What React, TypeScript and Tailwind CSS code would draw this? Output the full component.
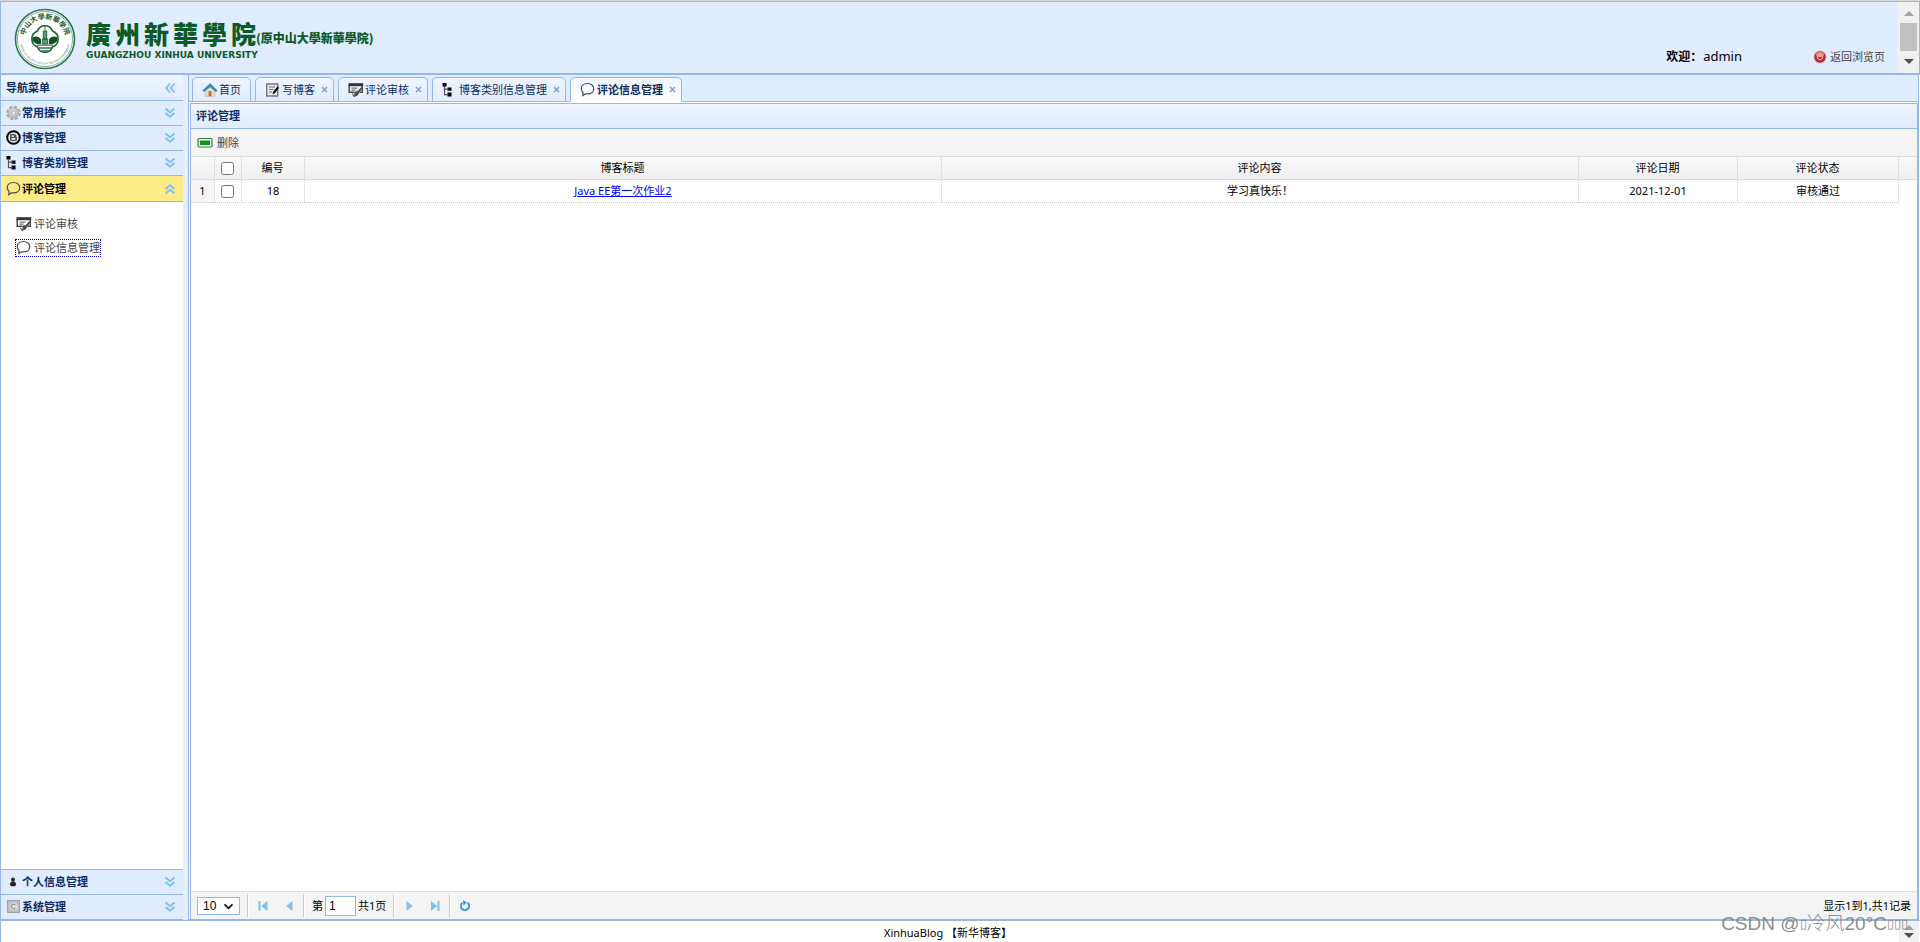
import { useState } from 'react'
import type { ReactNode } from 'react'
import clsx from 'clsx'

type IconProps = { className?: string }

function GearIcon() {
  return (
    <svg viewBox="0 0 16 16" className="w-4 h-4 shrink-0">
      <circle cx="7.5" cy="8" r="6.2" fill="none" stroke="#a9a9a9" strokeWidth="2.2" strokeDasharray="3.2 1.6" />
      <circle cx="7.5" cy="8" r="5.600" fill="#b4b4b4" />
      <circle cx="7" cy="7.2" r="4" fill="#cfcfcf" />
      <circle cx="7.5" cy="8" r="2" fill="#ececec" stroke="#999" strokeWidth="0.6" />
    </svg>
  )
}

function BloggerIcon() {
  return (
    <svg viewBox="0 0 16 16" className="w-4 h-4 shrink-0">
      <circle cx="7.500" cy="7.500" r="6.300" fill="#dfe5ef" stroke="#000" strokeWidth="2" />
      <path d="M5 4h3.400a1.800 1.800 0 0 1 1.800 1.800v.8l.8.6v2a1.900 1.900 0 0 1-1.900 1.900H5.500A1.500 1.500 0 0 1 4 9.600V5a1 1 0 0 1 1-1z" fill="#555" />
      <path d="M5.500 6.200h2.400M5.500 9h3.800" stroke="#fff" strokeWidth="1.300" />
    </svg>
  )
}

function TreeIcon() {
  return (
    <svg viewBox="0 0 16 16" className="w-4 h-4 shrink-0" fill="#000">
      <path d="M.5 1h4v3.500h-4zM5.500 5.500h4v3.200h-4zM5.500 10.500h4v4h-4z" />
      <path d="M2.500 4v8.700h4M2.500 7.200h4" fill="none" stroke="#555" strokeWidth="1.200" />
    </svg>
  )
}

function BubbleIcon() {
  return (
    <svg viewBox="0 0 16 16" className="w-4 h-4 shrink-0">
      <path
        d="M7.500 1.500c3.700 0 6.200 2.200 6.200 5.200s-2.500 5.200-6.200 5.200c-.6 0-1.200 0-1.700-.2L2.800 13.500l.3-3C2 9.600 1.300 8.300 1.300 6.700c0-3 2.500-5.200 6.200-5.200z"
        fill="none"
        stroke="#4c4c4c"
        strokeWidth="1.200"
      />
    </svg>
  )
}

function ReviewIcon() {
  return (
    <svg viewBox="0 0 16 16" className="w-4 h-4 shrink-0">
      <path d="M1.200 3v7.200H6M14.300 3v7.200h-2.500" fill="none" stroke="#4a4a4a" strokeWidth="1.500" />
      <path d="M.5 1.200h14.700v3H.5z" fill="#333" />
      <path d="M3.500 6.200h6M3.500 8.200h4" stroke="#777" strokeWidth="1.200" />
      <path d="M13.500 4.800 9.500 9.500 6 13.500 4.500 11 4 12l2 3 3.500-1.500 4.500-7z" fill="#444" />
      <path d="M10 8.500 6 10l1 4z" fill="#555" />
    </svg>
  )
}

function UserIcon() {
  return (
    <svg viewBox="0 0 16 16" className="w-4 h-4 shrink-0" fill="#222">
      <circle cx="7" cy="5.500" r="1.900" />
      <path d="M5.300 7.500h3.400l1.600 2.700-1.300 2H5l-1.300-2z" />
    </svg>
  )
}

function SystemIcon() {
  return (
    <svg viewBox="0 0 16 16" className="w-4 h-4 shrink-0">
      <rect x="1.500" y="1.500" width="12" height="12" fill="#bdbdbd" stroke="#a2a2a2" />
      <circle cx="7.500" cy="7.500" r="4" fill="#dedede" />
      <path d="M9.200 6a2.300 2.300 0 1 0 0 3" fill="none" stroke="#959595" strokeWidth="1.200" />
    </svg>
  )
}

function HomeIcon() {
  return (
    <svg viewBox="0 0 16 16" className="w-4 h-4 shrink-0">
      <path d="M3.200 7.500 8 3.300l4.800 4.200v6.800H3.200z" fill="#e6ddcf" stroke="#b3aa9d" strokeWidth="0.600" />
      <path d="M6.500 9h3v5.300h-3z" fill="#c07a36" />
      <path d="M.8 8.600 8 1.600l7.200 7-1.400 1L8 4.800 2.200 9.600z" fill="#2a94b8" stroke="#1b6f90" strokeWidth="0.500" />
    </svg>
  )
}

function WriteIcon() {
  return (
    <svg viewBox="0 0 16 16" className="w-4 h-4 shrink-0">
      <path d="M1.700 2h11v12h-11z" fill="#e4e7ee" stroke="#777" strokeWidth="1.400" />
      <path d="M4 5h6M4 7.500h4.500M4 10h3" stroke="#777" strokeWidth="1.200" />
      <path d="M12.500 4.500 14 5.800 10.200 11l-2.700 1.200.6-2.500z" fill="#111" />
    </svg>
  )
}

function DeleteIcon() {
  return (
    <svg viewBox="0 0 16 16" className="w-4 h-4 shrink-0">
      <rect x="1" y="3.500" width="14" height="8.500" rx="1" fill="#eaf7ea" stroke="#3c7f4d" strokeWidth="1.200" />
      <rect x="3" y="5.500" width="10" height="4.500" fill="#12901a" />
    </svg>
  )
}

function PowerIcon() {
  return (
    <svg viewBox="0 0 16 16" className="w-4 h-4 shrink-0">
      <circle cx="8" cy="8" r="6" fill="#c62828" stroke="#b9a0a0" strokeWidth="0.800" />
      <ellipse cx="8" cy="5.500" rx="4" ry="2.600" fill="#e58a85" />
      <path d="M6.200 6.500a2.500 2.500 0 1 0 3.600 0M8 5v3" fill="none" stroke="#f6d4d2" strokeWidth="1" />
    </svg>
  )
}

function DoubleChevron({ className }: IconProps) {
  return (
    <svg viewBox="0 0 12 12" className={clsx('w-3 h-3 shrink-0', className)} fill="none" stroke="#7fc0f2" strokeWidth="1.800">
      <path d="M1.500 1.500 6 5.300l4.500-3.800M1.500 6 6 9.800 10.500 6" />
    </svg>
  )
}

function UniversitySeal() {
  return (
    <svg viewBox="0 0 62 62" className="w-[62px] h-[62px] shrink-0">
      <defs>
        <path id="sealTop" d="M11 36a20.500 20.500 0 1 1 40 0" />
        <path id="sealBottom" d="M6.500 25a25.300 25.300 0 1 0 49 0" />
      </defs>
      <circle cx="31" cy="31" r="29.500" fill="#fff" stroke="#2f7550" strokeWidth="1.600" />
      <circle cx="31" cy="31" r="27.600" fill="none" stroke="#4f9068" strokeWidth="0.700" />
      <text className="font-['Noto_Sans_CJK_TC',sans-serif] font-bold" fontSize="7" fill="#125a2b">
        <textPath href="#sealTop" startOffset="50%" textAnchor="middle">中山大學新華學院</textPath>
      </text>
      <text className="font-['Liberation_Serif',serif]" fontSize="3" fill="#2f7043">
        <textPath href="#sealBottom" startOffset="50%" textAnchor="middle">XINHUA COLLEGE OF SUN YAT-SEN UNIVERSITY</textPath>
      </text>
      <path
        d="M23.500 23a8 8 0 0 1 15 0 8.500 8.500 0 0 1 0 16 8 8 0 0 1-15 0 8.500 8.500 0 0 1 0-16z"
        fill="#fff"
        stroke="#176234"
        strokeWidth="1.600"
      />
      <path d="M31 18.500v4M29.300 23h3.400v8h-3.400zM28.300 31h5.400v5h-5.400z" fill="#5b9872" stroke="#176234" strokeWidth="0.900" />
      <path d="M18.500 29.500c3-2 7-1 8.500 2v4.500h-4c-3-1-5-3.500-4.500-6.500zM43.500 29.500c-3-2-7-1-8.500 2v4.500h4c3-1 5-3.500 4.500-6.500z" fill="#0f5427" />
      <path d="M23 37.200h16M24.500 40h13M27.500 43h7" stroke="#2f7550" strokeWidth="1.300" />
    </svg>
  )
}

const menus = [
  { label: '常用操作', icon: <GearIcon /> },
  { label: '博客管理', icon: <BloggerIcon /> },
  { label: '博客类别管理', icon: <TreeIcon /> },
  { label: '评论管理', icon: <BubbleIcon /> },
  { label: '个人信息管理', icon: <UserIcon /> },
  { label: '系统管理', icon: <SystemIcon /> },
]

const tabs = [
  { label: '首页', icon: <HomeIcon />, closable: false },
  { label: '写博客', icon: <WriteIcon />, closable: true },
  { label: '评论审核', icon: <ReviewIcon />, closable: true },
  { label: '博客类别信息管理', icon: <TreeIcon />, closable: true },
  { label: '评论信息管理', icon: <BubbleIcon />, closable: true },
]

const comments = [
  { id: 18, title: 'Java EE第一次作业2', content: '学习真快乐！', date: '2021-12-01', status: '审核通过' },
]

function ScrollArrow({ down = false, light = false }: { down?: boolean; light?: boolean }) {
  return (
    <svg viewBox="0 0 10 5" className="w-[10px] h-[5px] shrink-0" fill={light ? '#a3a3a3' : '#505050'}>
      <path d={down ? 'M0 0h10L5 5z' : 'M0 5h10L5 0z'} />
    </svg>
  )
}

function Header() {
  return (
    <header className="h-[74px] shrink-0 flex border-t border-t-[#d6d6d6]">
      <div className="flex-1 flex border border-[#95b8e7] bg-[#e0ecff]">
        <div className="flex items-start pl-[13px]">
          <div className="pt-[6px]">
            <UniversitySeal />
          </div>
          <div className="pt-[15px] pl-[10px] text-[#0c5a26]">
            <div className="w-[170px] h-8 flex justify-between items-center font-['Noto_Sans_CJK_TC',sans-serif] font-black text-[25px] leading-none">
              {['廣', '州', '新', '華', '學', '院'].map((char) => (
                <span key={char}>{char}</span>
              ))}
            </div>
            <div className="font-['DejaVu_Sans',sans-serif] font-bold text-[9px] leading-[12px] whitespace-nowrap w-[170px]">
              GUANGZHOU XINHUA UNIVERSITY
            </div>
          </div>
          <div className="pt-[29px] text-[#0c5a26] font-['Noto_Sans_CJK_TC',sans-serif] font-black text-[12px] leading-[14px] whitespace-nowrap">
            (原中山大學新華學院)
          </div>
        </div>
        <div className="ml-auto flex items-end pb-2 pr-[13px]">
          <p className="text-[12px] leading-4 mr-[70px]">
            <strong>欢迎：</strong>
            <span className="ml-px text-[13px]">admin</span>
          </p>
          <a href="#browse" className="flex items-center gap-[2px] text-[#444]">
            <PowerIcon />
            返回浏览页
          </a>
        </div>
        <div aria-hidden className="w-[21px] flex flex-col items-center bg-[#f1f1f1] pt-[9px] pb-[9px]">
          <ScrollArrow light />
          <div className="w-[17px] h-7 mt-[7px] mb-auto bg-[#c1c1c1]" />
          <ScrollArrow down />
        </div>
      </div>
    </header>
  )
}

type MenuHeaderProps = { label: string; icon: ReactNode; open: boolean; onClick: () => void }

function MenuHeader({ label, icon, open, onClick }: MenuHeaderProps) {
  return (
    <button
      onClick={onClick}
      aria-expanded={open}
      className={clsx(
        'w-full shrink-0 flex items-center pl-[5px] pr-[7px] font-bold border-b border-[#95b8e7]',
        open ? 'h-[26px] bg-[#fbec88] text-black' : 'h-[25px] bg-[#e0ecff] text-[#0e2d5f]',
      )}
    >
      {icon}
      {label}
      <DoubleChevron className={clsx('ml-auto', open && 'rotate-180')} />
    </button>
  )
}

function Sidebar() {
  const [active, setActive] = useState('评论管理')
  const top = menus.slice(0, 4)
  const bottom = menus.slice(4)

  return (
    <aside className="w-[183px] shrink-0 flex flex-col border-l border-[#95b8e7] bg-white">
      <div className="h-[26px] shrink-0 flex items-center pl-[5px] pr-[7px] font-bold text-[#0e2d5f] border-b border-[#95b8e7] bg-linear-to-b from-[#eff5ff] to-[#e0ecff]">
        导航菜单
        <button aria-label="collapse" className="ml-auto">
          <DoubleChevron className="rotate-90" />
        </button>
      </div>
      {top.map((menu) => (
        <MenuHeader key={menu.label} {...menu} open={active === menu.label} onClick={() => setActive(menu.label)} />
      ))}
      <nav className="flex-1 flex flex-col items-start gap-[6px] pl-[14px] pt-[13px] text-[#444]">
        <a href="#review" className="h-[18px] flex items-center gap-[2px] border border-transparent">
          <ReviewIcon />
          评论审核
        </a>
        <a href="#comments" className="h-[18px] flex items-center gap-[2px] border border-dotted border-[#0000c0]">
          <BubbleIcon />
          评论信息管理
        </a>
      </nav>
      <div className="border-t border-[#95b8e7]">
        {bottom.map((menu) => (
          <MenuHeader key={menu.label} {...menu} open={active === menu.label} onClick={() => setActive(menu.label)} />
        ))}
      </div>
    </aside>
  )
}

function TabBar() {
  const [current, setCurrent] = useState('评论信息管理')

  return (
    <div className="h-[27px] shrink-0 flex items-end gap-1 pl-[3px] border-b border-[#95b8e7] bg-[#e0ecff]">
      {tabs.map((tab) => {
        const selected = tab.label === current
        return (
          <div
            key={tab.label}
            className={clsx(
              'h-[25px] flex items-center border border-[#95b8e7] rounded-t-[5px] pl-[9px] -mb-px text-[#0e2d5f] bg-linear-to-b from-[#eff5ff]',
              selected ? 'to-white border-b-white font-bold' : 'to-[#e0ecff]',
              tab.closable ? 'pr-[5px]' : 'pr-[9px]',
            )}
          >
            <button onClick={() => setCurrent(tab.label)} className="flex items-center gap-px">
              {tab.icon}
              {tab.label}
            </button>
            {tab.closable && (
              <button aria-label={`关闭${tab.label}`} className="ml-[6px]">
                <svg viewBox="0 0 7 7" className="w-[7px] h-[7px]" stroke="#7d9fd3" strokeWidth="1.500">
                  <path d="M1 1l5 5M6 1 1 6" />
                </svg>
              </button>
            )}
          </div>
        )
      })}
    </div>
  )
}

const headCell = 'h-[23px] p-0 pr-px font-normal border-b border-b-[#ddd] border-r border-r-[#ccc] [border-right-style:dotted] bg-linear-to-b from-[#f9f9f9] to-[#efefef]'
const bodyCell = 'h-[23px] p-0 text-center border-b border-r border-dotted border-[#ccc]'

function CommentGrid() {
  return (
    <table className="w-full table-fixed border-separate border-spacing-0">
      <colgroup>
        <col className="w-6" />
        <col className="w-[27px]" />
        <col className="w-[63px]" />
        <col />
        <col />
        <col className="w-[159px]" />
        <col className="w-[161px]" />
        <col className="w-[18px]" />
      </colgroup>
      <thead>
        <tr>
          <th className={headCell} />
          <th className={headCell}>
            <input type="checkbox" aria-label="全选" className="block mx-auto w-[13px] h-[13px]" />
          </th>
          <th className={headCell}>编号</th>
          <th className={headCell}>博客标题</th>
          <th className={headCell}>评论内容</th>
          <th className={headCell}>评论日期</th>
          <th className={headCell}>评论状态</th>
          <th className="p-0 border-b border-[#ddd] bg-linear-to-b from-[#f9f9f9] to-[#efefef]" />
        </tr>
      </thead>
      <tbody>
        {comments.map((row, i) => (
          <tr key={row.id}>
            <td className={clsx(bodyCell, 'bg-[#f5f5f5]')}>{i + 1}</td>
            <td className={clsx(bodyCell, 'pr-px')}>
              <input type="checkbox" aria-label={row.title} className="block mx-auto w-[13px] h-[13px]" />
            </td>
            <td className={bodyCell}>{row.id}</td>
            <td className={bodyCell}>
              <a href="#blog" className="text-[#0000ee] underline">{row.title}</a>
            </td>
            <td className={bodyCell}>{row.content}</td>
            <td className={bodyCell}>{row.date}</td>
            <td className={bodyCell}>{row.status}</td>
            <td />
          </tr>
        ))}
      </tbody>
    </table>
  )
}

function PagerButton({ label, children }: { label: string; children: ReactNode }) {
  return (
    <button aria-label={label} className="w-[26px] h-6 flex items-center justify-center">
      <svg viewBox="0 0 12 12" className="w-3 h-3" fill="#80c1f0">
        {children}
      </svg>
    </button>
  )
}

function Separator() {
  return <div className="w-[2px] h-[23px] mx-px border-l border-l-[#ccc] border-r border-r-white" />
}

function Pager() {
  return (
    <div className="h-7 shrink-0 flex items-center px-[6px] border-t border-[#ddd] bg-[#f4f4f4]">
      <div className="relative mr-[6px]">
        <select aria-label="每页条数" className="block appearance-none w-[43px] h-[18px] pl-[5px] border border-[#95b8e7] bg-white font-['Liberation_Sans',sans-serif] text-[12px] leading-4">
          <option>10</option>
          <option>20</option>
          <option>50</option>
        </select>
        <svg viewBox="0 0 12 8" className="absolute right-[6px] top-[6px] w-[11px] h-[7px] pointer-events-none" fill="none" stroke="#111" strokeWidth="2">
          <path d="M1.500 1.500 6 6l4.500-4.500" />
        </svg>
      </div>
      <Separator />
      <PagerButton label="首页">
        <path d="M1.500 1h2v10h-2zM10.500 1v10L4.200 6z" />
      </PagerButton>
      <PagerButton label="上一页">
        <path d="M9.500 1v10L3.200 6z" />
      </PagerButton>
      <Separator />
      <label className="flex items-center gap-[2px] pl-[6px]">
        第
        <input defaultValue="1" className="w-[31px] h-5 pl-[3px] border border-[#95b8e7] bg-white font-['Liberation_Sans',sans-serif] text-[12px]" />
      </label>
      <span className="pl-[2px] pr-[6px]">共1页</span>
      <Separator />
      <PagerButton label="下一页">
        <path d="M3.500 1v10L9.800 6z" />
      </PagerButton>
      <PagerButton label="末页">
        <path d="M2 1v10l6.300-5zM8.500 1h2v10h-2z" />
      </PagerButton>
      <Separator />
      <PagerButton label="刷新">
        <path d="M8.600 2.800a4.100 4.100 0 1 1-5.200 0" fill="none" stroke="#3f97d3" strokeWidth="1.900" />
        <path d="M3.800.2 8 2.200 4.600 5.400z" fill="#3f97d3" />
      </PagerButton>
      <span className="ml-auto">显示1到1,共1记录</span>
    </div>
  )
}

export default function App() {
  return (
    <div className="relative h-screen flex flex-col overflow-hidden bg-white text-black text-[11px] leading-4 font-['Noto_Sans','Noto_Sans_CJK_SC',sans-serif]">
      <Header />
      <div className="flex-1 min-h-0 flex pr-px border-t border-[#95b8e7]">
        <Sidebar />
        <div className="w-[5px] shrink-0 bg-[#e6eef8]" />
        <main className="flex-1 min-w-0 flex flex-col border-x border-b border-[#95b8e7]">
          <TabBar />
          <section className="flex-1 min-h-0 flex flex-col mt-px ml-px border-t border-x border-[#95b8e7]">
            <h2 className="h-[25px] shrink-0 flex items-center pl-[5px] font-bold text-[#0e2d5f] border-b border-[#95b8e7] bg-linear-to-b from-[#eff5ff] to-[#e0ecff]">
              评论管理
            </h2>
            <div className="h-7 shrink-0 flex items-center pl-[6px] border-b border-[#ddd] bg-[#f4f4f4]">
              <button className="flex items-center gap-1 text-[#444]">
                <DeleteIcon />
                删除
              </button>
            </div>
            <div className="flex-1 min-h-0">
              <CommentGrid />
            </div>
            <Pager />
          </section>
        </main>
      </div>
      <footer className="h-[22px] shrink-0 flex border-t border-l border-[#95b8e7] bg-white">
        <p className="flex-1 pt-1 pr-1 text-center">XinhuaBlog 【新华博客】</p>
        <div aria-hidden className="w-5 mr-px flex flex-col items-center justify-between pt-1 pb-1 bg-[#f1f1f1]">
          <ScrollArrow light />
          <ScrollArrow down />
        </div>
      </footer>
      <div className="absolute right-3 bottom-[6px] flex items-center font-['Liberation_Sans','Noto_Sans_CJK_SC',sans-serif] font-light text-[19px] leading-6 text-[#808080]/90 pointer-events-none">
        CSDN @
        <span className="font-['DejaVu_Sans',sans-serif] text-[13px]">▯</span>
        冷风20°C
        <span className="font-['DejaVu_Sans',sans-serif] text-[13px]">▯▯▯</span>
      </div>
    </div>
  )
}
